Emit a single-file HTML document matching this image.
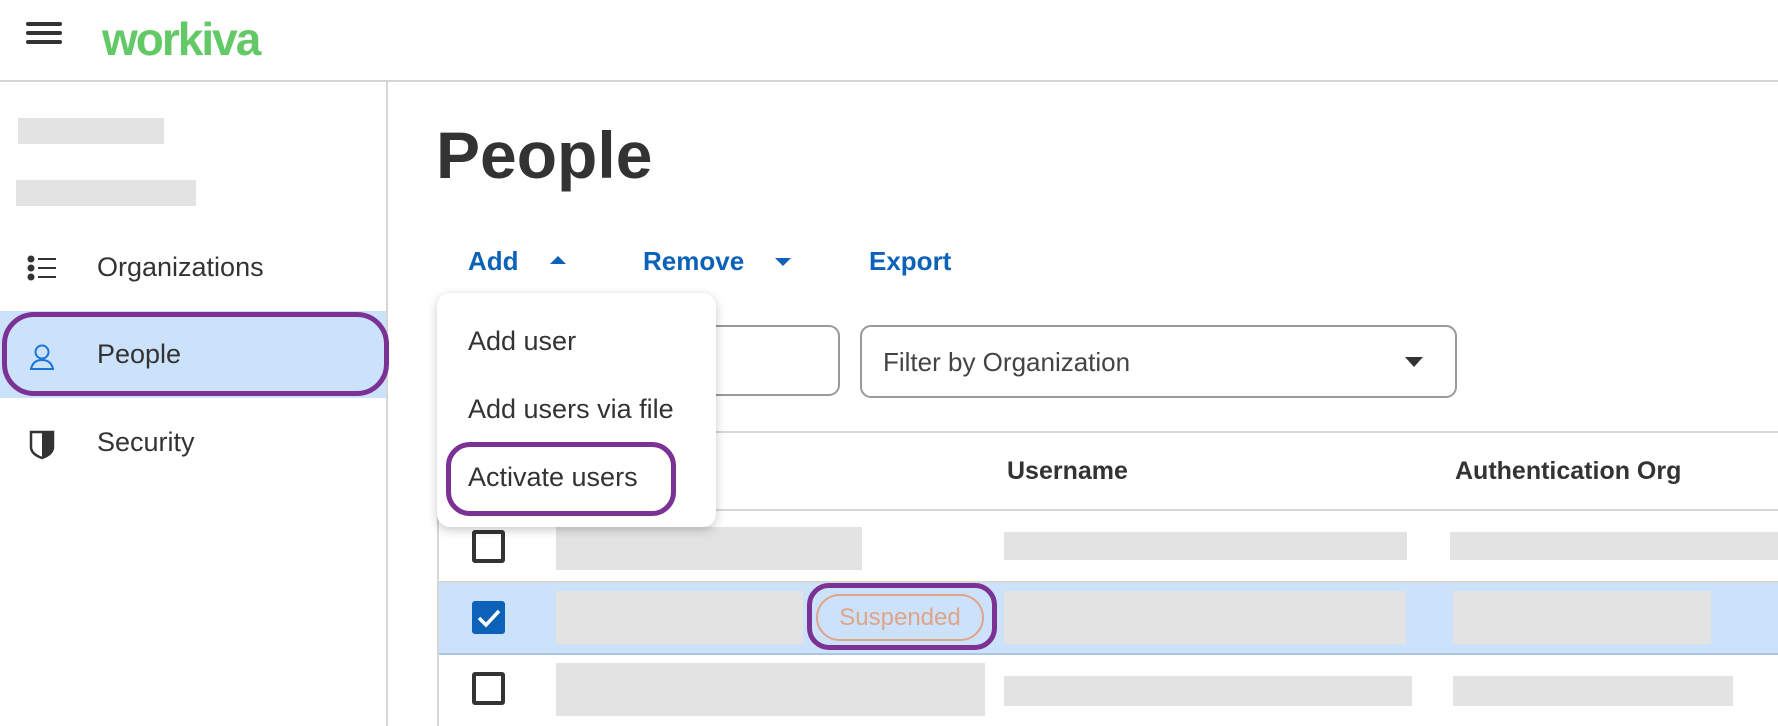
<!DOCTYPE html>
<html><head><meta charset="utf-8"><style>
*{margin:0;padding:0;box-sizing:border-box}
body{width:1778px;height:726px;overflow:hidden;background:#fff;font-family:"Liberation Sans",sans-serif;color:#333;position:relative}
.a{position:absolute}
.g{position:absolute;background:#e3e3e3}
.t{position:absolute;white-space:nowrap;line-height:1}
.nav{font-size:27px;color:#333}
.blue{color:#0b62b8;font-weight:bold;font-size:26px}
.menu{font-size:27px;color:#333}
.cb{position:absolute;width:33px;height:33px;border:4px solid #333;border-radius:3px;left:472px}
</style></head><body>
<!-- header -->
<div class="a" style="left:26px;top:22px;width:36px;height:4px;background:#333;border-radius:2px"></div>
<div class="a" style="left:26px;top:31px;width:36px;height:4px;background:#333;border-radius:2px"></div>
<div class="a" style="left:26px;top:40px;width:36px;height:4px;background:#333;border-radius:2px"></div>
<div class="t" style="left:102px;top:16px;font-size:46px;font-weight:bold;color:#63c966;letter-spacing:-2px">workiva</div>
<div class="a" style="left:0;top:80px;width:1778px;height:2px;background:#d6d6d6"></div>
<!-- sidebar -->
<div class="a" style="left:386px;top:81px;width:2px;height:645px;background:#d6d6d6"></div>
<div class="g" style="left:18px;top:118px;width:146px;height:26px"></div>
<div class="g" style="left:16px;top:180px;width:180px;height:26px"></div>
<svg class="a" style="left:26px;top:254px" width="32" height="30" viewBox="0 0 32 30"><circle cx="5" cy="5" r="3.5" fill="#333"/><circle cx="5" cy="14" r="3.5" fill="#333"/><circle cx="5" cy="23" r="3.5" fill="#333"/><rect x="12" y="4" width="18" height="2" fill="#333"/><rect x="12" y="13" width="18" height="2" fill="#333"/><rect x="12" y="22" width="18" height="2" fill="#333"/></svg>
<div class="t nav" style="left:97px;top:254px">Organizations</div>
<div class="a" style="left:0;top:311px;width:386px;height:87px;background:#cce2fb"></div>
<div class="a" style="left:2px;top:312px;width:387px;height:84px;border:5px solid #7b3294;border-radius:32px"></div>
<svg class="a" style="left:29px;top:343px" width="26" height="28" viewBox="0 0 26 28"><circle cx="13" cy="9" r="6.5" fill="none" stroke="#1a73d9" stroke-width="2"/><path d="M2 26 Q4 17 13 17 Q22 17 24 26 Z" fill="none" stroke="#1a73d9" stroke-width="2"/></svg>
<div class="t nav" style="left:97px;top:341px">People</div>
<svg class="a" style="left:29px;top:430px" width="26" height="30" viewBox="0 0 26 30"><path d="M2 2 H24 V17 Q24 24 13 28 Q2 24 2 17 Z" fill="none" stroke="#333" stroke-width="2.5"/><path d="M13 2 H24 V17 Q24 24 13 28 Z" fill="#333"/></svg>
<div class="t nav" style="left:97px;top:429px">Security</div>
<!-- main -->
<div class="t" style="left:436px;top:122px;font-size:66px;font-weight:bold;color:#333">People</div>
<div class="t blue" style="left:468px;top:248px">Add</div>
<svg class="a" style="left:550px;top:255px" width="16" height="10"><path d="M0 9 L8 1 L16 9 Z" fill="#0b62b8"/></svg>
<div class="t blue" style="left:643px;top:248px">Remove</div>
<svg class="a" style="left:775px;top:257px" width="16" height="10"><path d="M0 1 L16 1 L8 9 Z" fill="#0b62b8"/></svg>
<div class="t blue" style="left:869px;top:248px">Export</div>
<!-- filters -->
<div class="a" style="left:460px;top:325px;width:380px;height:71px;border:2px solid #9a9a9a;border-radius:11px"></div>
<div class="a" style="left:860px;top:325px;width:597px;height:73px;border:2px solid #9a9a9a;border-radius:11px"></div>
<div class="t" style="left:883px;top:349px;font-size:26px;color:#444">Filter by Organization</div>
<svg class="a" style="left:1405px;top:357px" width="18" height="10"><path d="M0 0 L18 0 L9 10 Z" fill="#333"/></svg>
<!-- table -->
<div class="a" style="left:437px;top:431px;width:1341px;height:2px;background:#d6d6d6"></div>
<div class="a" style="left:437px;top:431px;width:2px;height:295px;background:#d6d6d6"></div>
<div class="t" style="left:1007px;top:459px;font-size:25px;font-weight:bold;color:#333">Username</div>
<div class="t" style="left:1455px;top:459px;font-size:25px;font-weight:bold;color:#333">Authentication Org</div>
<div class="a" style="left:439px;top:509px;width:1339px;height:2px;background:#d6d6d6"></div>
<div class="a" style="left:439px;top:582px;width:1339px;height:72px;background:#cce2fb"></div>
<div class="a" style="left:439px;top:581px;width:1339px;height:2px;background:#d6d6d6"></div>
<div class="a" style="left:439px;top:653px;width:1339px;height:2px;background:#a9c6e8"></div>
<div class="cb" style="top:530px"></div>
<div class="a" style="left:472px;top:601px;width:33px;height:33px;background:#0b62b8;border-radius:3px"></div>
<svg class="a" style="left:472px;top:601px" width="33" height="33"><path d="M7 17 L14 24 L27 10" fill="none" stroke="#fff" stroke-width="3.5"/></svg>
<div class="cb" style="top:672px"></div>
<div class="g" style="left:556px;top:527px;width:306px;height:43px"></div>
<div class="g" style="left:1004px;top:532px;width:403px;height:28px"></div>
<div class="g" style="left:1450px;top:532px;width:328px;height:28px"></div>
<div class="g" style="left:556px;top:591px;width:247px;height:53px"></div>
<div class="a" style="left:816px;top:594px;width:168px;height:47px;border:2px solid #e0a48a;border-radius:24px"></div>
<div class="t" style="left:816px;top:606px;width:168px;text-align:center;font-size:24px;color:#e0a48a">Suspended</div>
<div class="a" style="left:807px;top:583px;width:190px;height:67px;border:5px solid #7b3294;border-radius:22px"></div>
<div class="g" style="left:1004px;top:591px;width:402px;height:53px"></div>
<div class="g" style="left:1453px;top:591px;width:258px;height:53px"></div>
<div class="g" style="left:556px;top:663px;width:429px;height:53px"></div>
<div class="g" style="left:1004px;top:676px;width:408px;height:30px"></div>
<div class="g" style="left:1453px;top:676px;width:280px;height:30px"></div>
<!-- dropdown -->
<div class="a" style="left:437px;top:293px;width:279px;height:234px;background:#fff;border-radius:13px;box-shadow:0 3px 10px rgba(0,0,0,0.22)"></div>
<div class="t menu" style="left:468px;top:328px">Add user</div>
<div class="t menu" style="left:468px;top:396px">Add users via file</div>
<div class="t menu" style="left:468px;top:464px">Activate users</div>
<div class="a" style="left:446px;top:442px;width:230px;height:74px;border:5px solid #7b3294;border-radius:24px"></div>
</body></html>
